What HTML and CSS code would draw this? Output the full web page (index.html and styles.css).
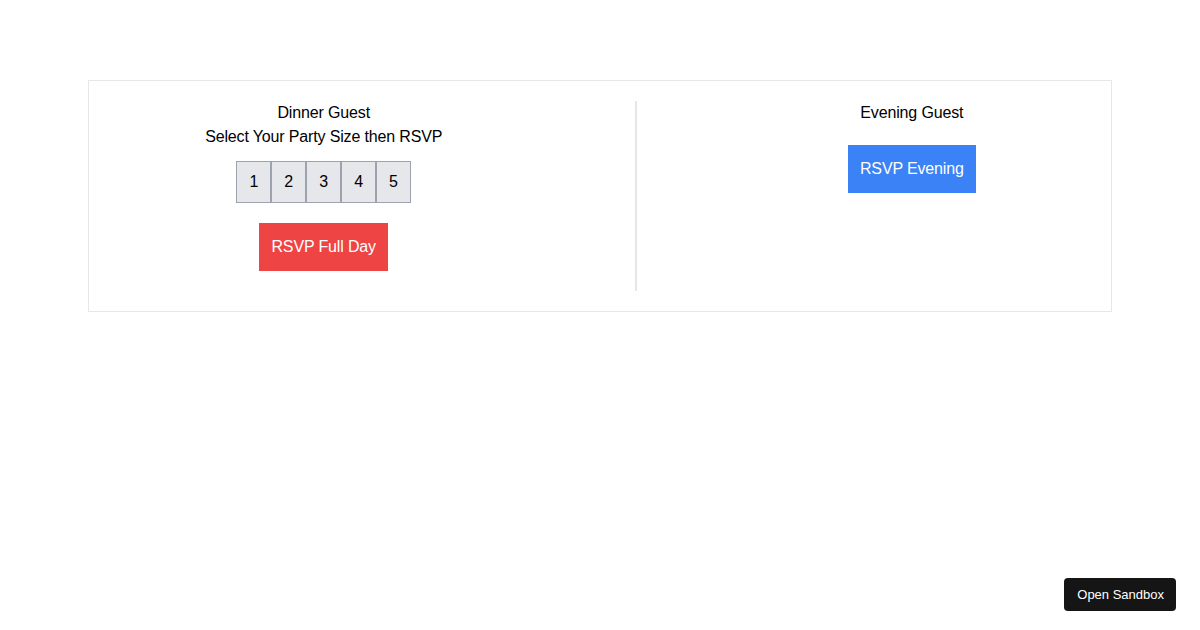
FILE: index.html
```html
<!DOCTYPE html>
<html lang="en">
<head>
  <meta charset="UTF-8">
  <meta name="viewport" content="width=device-width, initial-scale=1.0">
  <title>RSVP</title>
  <link rel="stylesheet" href="styles.css">
</head>
<body>

<div class="card">
  <div class="col dinner">
    <div>Dinner Guest</div>
    <div>Select Your Party Size then RSVP</div>
    <div class="sizes">
      <button class="size">1</button>
      <button class="size">2</button>
      <button class="size">3</button>
      <button class="size">4</button>
      <button class="size">5</button>
    </div>
    <button class="rsvp red">RSVP Full Day</button>
  </div>

  <div class="divider"></div>

  <div class="col evening">
    <div>Evening Guest</div>
    <button class="rsvp blue">RSVP Evening</button>
  </div>
</div>

<a class="sandbox" href="#">Open Sandbox</a>

</body>
</html>
```

FILE: styles.css
```css
body {
  margin: 0;
  font-family: "Liberation Sans", Arial, sans-serif;
  font-size: 16px;
  line-height: 24px;
  letter-spacing: -0.15px;
  color: #000;
  background: #fff;
}

.card {
  width: 1024px;
  margin: 80px auto 0;
  padding: 20px;
  box-sizing: border-box;
  border: 1px solid #e5e7eb;
  display: flex;
  justify-content: space-around;
}

.col {
  display: flex;
  flex-direction: column;
  align-items: center;
  text-align: center;
}

.evening {
  width: 166px;
}

.divider {
  width: 2px;
  background-color: #e5e7eb;
}

.sizes {
  display: flex;
  margin-top: 12px;
}

.size {
  font: inherit;
  letter-spacing: 0;
  color: #000;
  background-color: #e5e7eb;
  border: 1px solid #9ca3af;
  padding: 8px 12px;
  margin: 0;
  cursor: pointer;
}

.rsvp {
  font: inherit;
  letter-spacing: inherit;
  color: #fff;
  border: none;
  padding: 12px;
  margin-top: 20px;
  cursor: pointer;
}

.red {
  background-color: #ef4444;
  margin-bottom: 20px;
}

.blue {
  background-color: #3b82f6;
}

.sandbox {
  position: fixed;
  right: 24px;
  bottom: 19px;
  background-color: #151515;
  color: #fff;
  font-size: 13px;
  line-height: 17px;
  letter-spacing: 0;
  padding: 8px 12px 8px 13px;
  border-radius: 4px;
  text-decoration: none;
}
```
